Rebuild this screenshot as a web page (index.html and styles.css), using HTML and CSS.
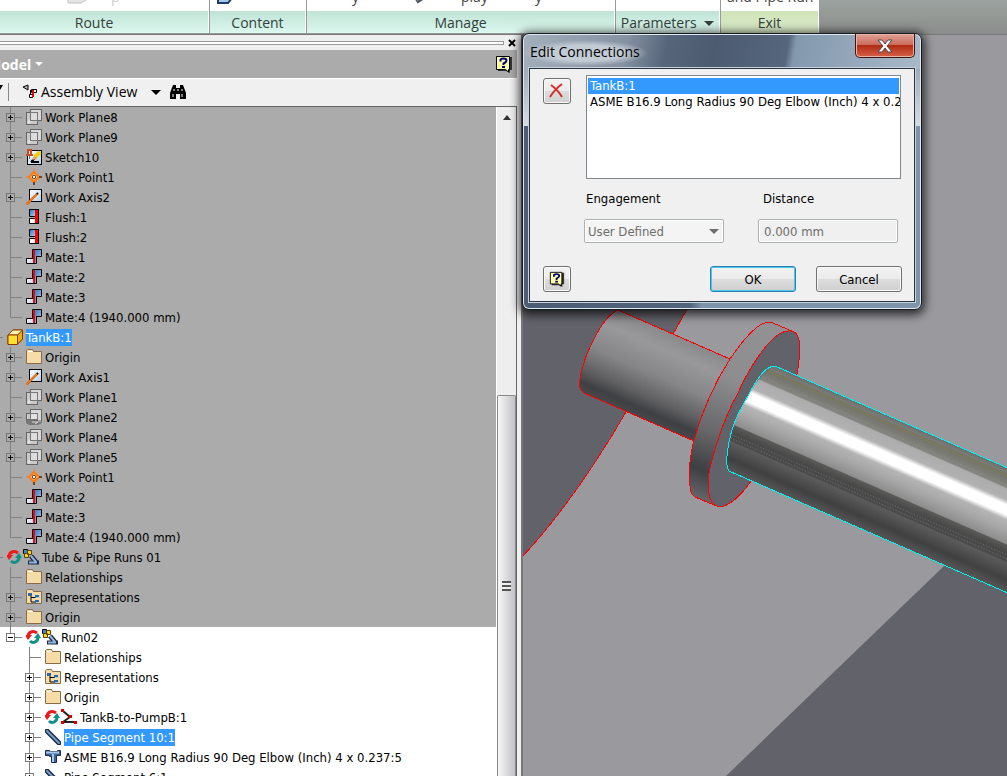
FILE: index.html
```html
<!DOCTYPE html>
<html lang="en">
<head>
    <meta charset="UTF-8">
    <meta name="viewport" content="width=device-width, initial-scale=1.0">
    <title>Edit Connections</title>
    <link rel="stylesheet" href="styles.css">
</head>
<body>

<!-- Icon set -->
<svg class="defs" width="0" height="0" aria-hidden="true">
    <defs>
        <linearGradient id="blueFill" x1="0" y1="0" x2="1" y2="1">
            <stop offset="0" stop-color="#2f78c0"/>
            <stop offset="1" stop-color="#a8d0f0"/>
        </linearGradient>
        <linearGradient id="paleFill" x1="0" y1="0" x2="1" y2="1">
            <stop offset="0" stop-color="#ffffff"/>
            <stop offset="1" stop-color="#b4d0ee"/>
        </linearGradient>
        <symbol id="plane" viewBox="0 0 16 16">
            <rect x="4.5" y=".5" width="11" height="11" fill="#d8d8d8" stroke="#666"/>
            <rect x=".5" y="3.5" width="11" height="12" fill="#c9c9c9" stroke="#666"/>
            <path d="M2 14L10 5" stroke="#dedede" stroke-width="3"/>
            <rect x="4.5" y="3.5" width="7" height="8" fill="#dcdcdc" stroke="#777"/>
        </symbol>
        <symbol id="planeCut" viewBox="0 0 16 16">
            <rect x="4.5" y=".5" width="11" height="11" fill="#d8d8d8" stroke="#666"/>
            <rect x=".5" y="4.5" width="11" height="6" fill="#c9c9c9" stroke="#666"/>
            <rect x="4.5" y="4.5" width="7" height="6" fill="#e2e2e2" stroke="#777"/>
            <path d="M0 11h6l3 1h7v2l-4 2H3l-3-2z" fill="#777"/>
            <path d="M6 13h6l-3 2M12 12h3" stroke="#d8d8d8" fill="none"/>
        </symbol>
        <symbol id="sketch" viewBox="0 0 16 16">
            <rect x="1.5" y="1.5" width="14" height="14" fill="url(#paleFill)" stroke="#000"/>
            <path d="M5 13h8M5 13l5-5" stroke="#000" stroke-width="2"/>
            <path d="M9 8l5-5" stroke="#f5d000" stroke-width="4"/>
            <path d="M6 11l2-4 3 3z" fill="#e8a868"/>
            <path d="M1 1h5M2 2v3M5 2v3M0 6h7" stroke="#d04a20" stroke-width="2"/>
            <path d="M3.500 6v4" stroke="#666"/>
        </symbol>
        <symbol id="point" viewBox="0 0 16 16">
            <path d="M8 0v16M0 8h16" stroke="#ff7a10"/>
            <path d="M8 3l5 5-5 5-5-5z" fill="#f8bc88" stroke="#ff7a10" stroke-width="2"/>
            <path d="M8 13v3M13 8h3" stroke="#000"/>
            <circle cx="8" cy="8" r="2" fill="#5a3010"/>
            <rect x="7" y="7" width="2" height="2" fill="#fff"/>
        </symbol>
        <symbol id="axis" viewBox="0 0 16 16">
            <rect x="3.500" y=".5" width="12" height="12" fill="url(#paleFill)" stroke="#000"/>
            <path d="M1 15L12 4" stroke="#000" stroke-width="2"/>
            <path d="M0 16L11 5" stroke="#ff7a10" stroke-width="2"/>
        </symbol>
        <symbol id="flush" viewBox="0 0 16 16">
            <path d="M3.500 .5h6v7h-6z" fill="url(#blueFill)" stroke="#000"/>
            <path d="M3.500 9.500h6v5h-6z" fill="#fff" stroke="#000"/>
            <path d="M9 .5h3.500v14H9" fill="none" stroke="#000"/>
            <path d="M10.500 1v13" stroke="#f00" stroke-width="3"/>
            <path d="M12.500 0v15" stroke="#000"/>
        </symbol>
        <symbol id="mate" viewBox="0 0 16 16">
            <path d="M8.500 .5h7v7h-5v7h-2z" fill="url(#blueFill)" stroke="#000"/>
            <path d="M.5 9.500h7v5h-7z" fill="url(#paleFill)" stroke="#000"/>
            <path d="M8 1v13" stroke="#f00" stroke-width="2"/>
            <path d="M6.500 9V.5H9M7 14.500h3" stroke="#000" fill="none"/>
        </symbol>
        <symbol id="part" viewBox="0 0 16 16">
            <path d="M1 6l5-5h9.500v9l-5 5H1z" fill="#ffe860" stroke="#8a3a00"/>
            <path d="M10.500 6l5-5v9l-5 5z" fill="#f0b000" stroke="#8a3a00"/>
            <path d="M1 6l5-5h9.500l-5 5z" fill="#fff6b0" stroke="#8a3a00"/>
            <path d="M1 6h9.500v9.500H1z" fill="#ffe030" stroke="#8a3a00"/>
        </symbol>
        <symbol id="folder" viewBox="0 0 16 16">
            <path d="M.5 14.500V1.500l1-1h5l1 2h8v12z" fill="#f6dca6" stroke="#8a6a48"/>
            <path d="M2 2.500h5" stroke="#fff"/>
        </symbol>
        <symbol id="reps" viewBox="0 0 16 16">
            <path d="M.5 14.500V1.500l1-1h5l1 2h8v12z" fill="#f6dca6" stroke="#8a6a48"/>
            <path d="M5 5v8h5M5 8.500h5" stroke="#000" fill="none"/>
            <path d="M2 4h4v3H2zM9 6h4v3H9zM9 11h4v3H9z" fill="#2a69a8"/>
            <path d="M10 8.500h4M10 13.500h3" stroke="#9fd0f5"/>
        </symbol>
        <symbol id="refresh" viewBox="0 0 16 16">
            <path d="M2 8c0-5 5-7 9-4" stroke="#f01818" stroke-width="3" fill="none"/>
            <path d="M-1 6h7L2 11z" fill="#f01818"/>
            <path d="M12 8c0 5-5 7-8 4" stroke="#109088" stroke-width="3" fill="none"/>
            <path d="M8 9h7l-3-5z" fill="#109088"/>
        </symbol>
        <symbol id="runs" viewBox="0 0 16 16">
            <path d="M.5 .5h4v4h-4z" fill="#3f86c8" stroke="#000"/>
            <path d="M4.500 1.500h4v4h-4zM1.500 4.500h4v4h-4z" fill="#ffd820" stroke="#5a4000"/>
            <path d="M8 7l5 6" stroke="#1c2c48" stroke-width="5"/>
            <path d="M5 13.500h11" stroke="#1c2c48" stroke-width="4"/>
            <path d="M8 7l5 6M6 13.500h8" stroke="#92b4dc" stroke-width="2"/>
        </symbol>
        <symbol id="route" viewBox="0 0 16 16">
            <path d="M2 2l7 6-7 5h12" stroke="#222" stroke-width="2" fill="none"/>
            <path d="M0 0h3v3H0zM8 6h3v3H8zM0 12h3v3H0zM13 12h3v3h-3z" fill="#e00000"/>
        </symbol>
        <symbol id="pipe" viewBox="0 0 16 16">
            <path d="M2 2l12 12" stroke="#1c2c48" stroke-width="5" stroke-linecap="round"/>
            <path d="M2 2l12 12" stroke="#7a9ecb" stroke-width="2" stroke-linecap="round"/>
        </symbol>
        <symbol id="elbow" viewBox="0 0 16 16">
            <path d="M.5 1.500h4v1h8v-1h3v5h-4v7h-5v-6h-2v-1h-4z" fill="#3f6598" stroke="#1c2c48"/>
            <path d="M1 3.500h13M8 5v8" stroke="#a8c8ea" stroke-width="2"/>
        </symbol>
        <symbol id="help" viewBox="0 0 18 18">
            <path d="M3 2h14v13h-2v3l-4-2H3z" fill="#333"/>
            <path d="M1.500 1.500h13v13h-1v2.500l-3-2.500h-9z" fill="#ffffa8" stroke="#000"/>
            <path d="M5.500 6.500V5q0-1.500 3-1.500t3 2q0 1.500-3 3v1.500" stroke="#00007c" stroke-width="2" fill="none"/>
            <path d="M7 11h3v2H7z" fill="#00007c"/>
        </symbol>
    </defs>
</svg>

<header class="ribbon">
    <section class="panel route">
        <div class="tools">
            <svg class="cut-icon" width="20" height="16" viewBox="0 0 20 16"><path d="M1 4h13l5-4v12l-5 3H1z" fill="#e4e4e4" stroke="#c2c2c2"/></svg>
            <span class="faded">p</span>
        </div>
        <h2>Route</h2>
    </section>
    <section class="panel content">
        <div class="tools">
            <svg class="cut-icon" width="16" height="16" viewBox="0 0 16 16"><path d="M1 4h11l3-3v9l-4 5H1z" fill="#a9c6e8" stroke="#1d3b66" stroke-width="2"/></svg>
        </div>
        <h2>Content</h2>
    </section>
    <section class="panel manage">
        <div class="tools">
            <span>y</span>
            <svg class="cut-icon" width="16" height="16" viewBox="0 0 16 16"><path d="M2 13l11-7" stroke="#505560" stroke-width="6"/><path d="M3 12l10-6" stroke="#aeb4bd" stroke-width="2"/></svg>
            <span>play</span>
            <span>y</span>
        </div>
        <h2>Manage</h2>
    </section>
    <section class="panel parameters">
        <div class="tools"></div>
        <h2>Parameters <i class="caret"></i></h2>
    </section>
    <section class="panel exit">
        <div class="tools"><span>and Pipe Run</span></div>
        <h2>Exit</h2>
    </section>
</header>

<main class="workspace">
    <aside class="browser">
        <div class="grip"><span class="grip-line"></span><button class="grip-close" aria-label="Close">
            <svg width="8" height="8" viewBox="0 0 8 8"><path d="M1 1l6 6M7 1L1 7" stroke="#000" stroke-width="2"/></svg></button></div>
        <div class="browser-title">
            <span class="model">Model</span><i class="caret"></i>
            <svg class="title-help" width="18" height="20"><use href="#help"/></svg>
        </div>
        <div class="toolbar">
            <svg width="22" height="20" viewBox="0 0 22 20">
                <path d="M0 3h3L0 8z" fill="#000"/>
                <path d="M8.500 1v18" stroke="#888"/>
            </svg>
            <svg width="16" height="20" viewBox="0 0 16 20">
                <path d="M1 5l5-2v5z" fill="#bbb" stroke="#000"/>
                <path d="M8.500 8v6" stroke="#000"/>
                <path d="M7.500 12.500h3v3h-3zM9.500 7.500h5v3h-5z" fill="#fff" stroke="#000"/>
                <path d="M11 8v7" stroke="#e00" stroke-width="2"/>
            </svg>
            <button class="view">Assembly View <i class="caret"></i></button>
            <button class="find" aria-label="Find">
                <svg width="16" height="14" viewBox="0 0 16 14"><path d="M3 0h3v3h4V0h3l3 8v6h-6V9H6v5H0V8z" fill="#000"/><path d="M3 9v3M4 4v2M12 9v3M12 4v2M8 4v2" stroke="#fff"/></svg>
            </button>
        </div>
        <div class="tree-wrap">
            <ul class="tree">
                <li class="row lv1"><i class="branch plus"></i><svg><use href="#plane"/></svg><span>Work Plane8</span></li>
                <li class="row lv1"><i class="branch plus"></i><svg><use href="#plane"/></svg><span>Work Plane9</span></li>
                <li class="row lv1"><i class="branch plus"></i><svg><use href="#sketch"/></svg><span>Sketch10</span></li>
                <li class="row lv1"><i class="branch"></i><svg><use href="#point"/></svg><span>Work Point1</span></li>
                <li class="row lv1"><i class="branch plus"></i><svg><use href="#axis"/></svg><span>Work Axis2</span></li>
                <li class="row lv1"><i class="branch"></i><svg><use href="#flush"/></svg><span>Flush:1</span></li>
                <li class="row lv1"><i class="branch"></i><svg><use href="#flush"/></svg><span>Flush:2</span></li>
                <li class="row lv1"><i class="branch"></i><svg><use href="#mate"/></svg><span>Mate:1</span></li>
                <li class="row lv1"><i class="branch"></i><svg><use href="#mate"/></svg><span>Mate:2</span></li>
                <li class="row lv1"><i class="branch"></i><svg><use href="#mate"/></svg><span>Mate:3</span></li>
                <li class="row lv1"><i class="branch last"></i><svg><use href="#mate"/></svg><span>Mate:4 (1940.000 mm)</span></li>

                <li class="row lv0"><i class="stub"></i><svg><use href="#part"/></svg><span class="selected">TankB:1</span></li>
                <li class="row lv1"><i class="branch plus"></i><svg><use href="#folder"/></svg><span>Origin</span></li>
                <li class="row lv1"><i class="branch plus"></i><svg><use href="#axis"/></svg><span>Work Axis1</span></li>
                <li class="row lv1"><i class="branch"></i><svg><use href="#plane"/></svg><span>Work Plane1</span></li>
                <li class="row lv1"><i class="branch plus"></i><svg><use href="#planeCut"/></svg><span>Work Plane2</span></li>
                <li class="row lv1"><i class="branch plus"></i><svg><use href="#plane"/></svg><span>Work Plane4</span></li>
                <li class="row lv1"><i class="branch plus"></i><svg><use href="#plane"/></svg><span>Work Plane5</span></li>
                <li class="row lv1"><i class="branch"></i><svg><use href="#point"/></svg><span>Work Point1</span></li>
                <li class="row lv1"><i class="branch"></i><svg><use href="#mate"/></svg><span>Mate:2</span></li>
                <li class="row lv1"><i class="branch"></i><svg><use href="#mate"/></svg><span>Mate:3</span></li>
                <li class="row lv1"><i class="branch last"></i><svg><use href="#mate"/></svg><span>Mate:4 (1940.000 mm)</span></li>

                <li class="row lv0"><i class="stub"></i><svg class="state"><use href="#refresh"/></svg><svg><use href="#runs"/></svg><span>Tube &amp; Pipe Runs 01</span></li>
                <li class="row lv1"><i class="branch"></i><svg><use href="#folder"/></svg><span>Relationships</span></li>
                <li class="row lv1"><i class="branch plus"></i><svg><use href="#reps"/></svg><span>Representations</span></li>
                <li class="row lv1"><i class="branch plus"></i><svg><use href="#folder"/></svg><span>Origin</span></li>

                <!-- Run being edited -->
                <li class="row lv1 editing"><i class="branch minus last"></i><svg class="state"><use href="#refresh"/></svg><svg><use href="#runs"/></svg><span>Run02</span></li>
                <li class="row lv2 editing"><i class="branch"></i><svg><use href="#folder"/></svg><span>Relationships</span></li>
                <li class="row lv2 editing"><i class="branch plus"></i><svg><use href="#reps"/></svg><span>Representations</span></li>
                <li class="row lv2 editing"><i class="branch plus"></i><svg><use href="#folder"/></svg><span>Origin</span></li>
                <li class="row lv2 editing"><i class="branch plus"></i><svg class="state"><use href="#refresh"/></svg><svg><use href="#route"/></svg><span>TankB-to-PumpB:1</span></li>
                <li class="row lv2 editing"><i class="branch plus"></i><svg><use href="#pipe"/></svg><span class="selected">Pipe Segment 10:1</span></li>
                <li class="row lv2 editing"><i class="branch plus"></i><svg><use href="#elbow"/></svg><span>ASME B16.9 Long Radius 90 Deg Elbow (Inch) 4 x 0.237:5</span></li>
                <li class="row lv2 editing"><i class="branch plus"></i><svg><use href="#pipe"/></svg><span>Pipe Segment 6:1</span></li>
            </ul>
            <div class="scrollbar">
                <i class="arrow-up"></i>
                <div class="thumb"><i class="thumb-grip"></i></div>
            </div>
        </div>
    </aside>

    <section class="viewport">
        <svg class="scene" viewBox="523 35 484 741" preserveAspectRatio="xMinYMin slice">
            <defs>
                <linearGradient id="stubFill" gradientUnits="userSpaceOnUse" x1="672" y1="334" x2="636" y2="416">
                    <stop offset="0" stop-color="#8a8a8c"/>
                    <stop offset=".2" stop-color="#99999c"/>
                    <stop offset=".5" stop-color="#858587"/>
                    <stop offset=".75" stop-color="#606062"/>
                    <stop offset=".9" stop-color="#3f4043"/>
                    <stop offset="1" stop-color="#48484b"/>
                </linearGradient>
                <linearGradient id="flangeFill" gradientUnits="userSpaceOnUse" x1="770" y1="322" x2="700" y2="500">
                    <stop offset="0" stop-color="#929295"/>
                    <stop offset=".35" stop-color="#8d8d90"/>
                    <stop offset=".65" stop-color="#67676a"/>
                    <stop offset=".85" stop-color="#3e3f43"/>
                    <stop offset="1" stop-color="#67676a"/>
                </linearGradient>
                <linearGradient id="steel" gradientUnits="userSpaceOnUse" x1="775" y1="366" x2="729" y2="471">
                    <stop offset="0" stop-color="#6d6d6d"/>
                    <stop offset=".04" stop-color="#7b7b78"/>
                    <stop offset=".06" stop-color="#74745f"/>
                    <stop offset=".08" stop-color="#777770"/>
                    <stop offset=".16" stop-color="#858582"/>
                    <stop offset=".17" stop-color="#acacac"/>
                    <stop offset=".26" stop-color="#b2b2b2"/>
                    <stop offset=".3" stop-color="#ffffff"/>
                    <stop offset=".38" stop-color="#ffffff"/>
                    <stop offset=".42" stop-color="#b4b4b4"/>
                    <stop offset=".5" stop-color="#a8a8a8"/>
                    <stop offset=".61" stop-color="#8e8e8e"/>
                    <stop offset=".62" stop-color="#5a5a58"/>
                    <stop offset=".68" stop-color="#4a4a4a"/>
                    <stop offset=".75" stop-color="#4b4b4b"/>
                    <stop offset=".76" stop-color="#5c5c5c"/>
                    <stop offset=".9" stop-color="#414141"/>
                    <stop offset="1" stop-color="#575757"/>
                </linearGradient>
                <clipPath id="pipeClip">
                    <path d="M775 366L1007 468V593L729 471C722 462 733 420 743 405C752 389 762 370 775 366z"/>
                </clipPath>
            </defs>

            <rect x="523" y="35" width="484" height="741" fill="#9a9a9e"/>
            <path d="M523 35H800L687 310L673 334L626 412Q575 500 523 556z" fill="#62626a"/>
            <path d="M700 35L1007 35V380L673 334L687 310z" fill="#9a9a9e"/>
            <path d="M1007 502L943 567L726 776H1007z" fill="#62626a"/>
            <path class="edge" d="M690 304L673 334L626 412Q575 500 523 556"/>

            <!-- Nozzle -->
            <path class="edge" d="M618 310C600 318 577 368 580 388Q581 391 584 393L694 441L730 359z" fill="url(#stubFill)"/>

            <!-- Flange -->
            <path class="edge" d="M794 332L773 323C758 316 735 352 730 359C717 379 703 408 694 440C689 460 688 478 691 492Q692 495 695 497L719 507z" fill="url(#flangeFill)"/>
            <path class="edge" d="M788 331C801 329 802 346 797 374C790 410 770 455 751 481C740 497 728 507 719 507C710 504 708 496 708 480C710 460 725 415 737 395C747 372 770 332 788 331z" fill="#62626a"/>

            <!-- Pipe segment -->
            <g clip-path="url(#pipeClip)">
                <path d="M720 350H1007V600H720z" fill="url(#steel)"/>
                <path d="M760 376L1007 485M758 379L1007 488M730 434L1007 555M728 437L1007 559" stroke="#a5a5a0" stroke-dasharray="1 2" opacity=".4"/>
                <path d="M768 371L1007 476" stroke="#7e7e5a"/>
            </g>
            <path d="M1010 594L729 471C724 464 728 430 743 405C752 389 762 366 775 366L1010 469" fill="none" stroke="#00f0f0" shape-rendering="crispEdges"/>
        </svg>

        <form class="dialog" onsubmit="return false">
            <div class="dialog-title">
                <h1>Edit Connections</h1>
                <button type="button" class="close" aria-label="Close">
                    <svg width="18" height="16" viewBox="0 0 18 16"><path d="M2 2h4l3 4 3-4h4l-5 6 5 6h-4l-3-4-3 4H2l5-6z" fill="#fff" stroke="#4a4a55"/></svg>
                </button>
            </div>
            <div class="client">
                <button type="button" class="tool remove" aria-label="Remove">
                    <svg width="16" height="16" viewBox="0 0 16 16"><path d="M2 2q7 5 11 12M13 1Q6 6 1 14" stroke="#d23030" stroke-width="2" fill="none"/></svg>
                </button>
                <select class="parts" size="6" aria-label="Connections">
                    <option selected>TankB:1</option>
                    <option>ASME B16.9 Long Radius 90 Deg Elbow (Inch) 4 x 0.237:5</option>
                </select>

                <label class="engagement" for="engagement">Engagement</label>
                <label class="distance" for="distance">Distance</label>
                <div class="dropdown">
                    <select id="engagement" disabled><option>User Defined</option></select>
                    <i class="caret"></i>
                </div>
                <input id="distance" type="text" value="0.000 mm" disabled>

                <button type="button" class="tool help" aria-label="Help">
                    <svg width="16" height="16"><use href="#help"/></svg>
                </button>
                <div class="actions">
                    <button class="btn ok">OK</button>
                    <button type="button" class="btn">Cancel</button>
                </div>
            </div>
        </form>
    </section>
</main>

</body>
</html>
```
FILE: styles.css
```css
* {
    box-sizing: border-box;
}

body {
    margin: 0;
    height: 100vh;
    display: flex;
    flex-direction: column;
    overflow: hidden;
    font-family: "DejaVu Sans Condensed", Tahoma, sans-serif;
    font-size: 13px;
    color: #000;
    background-color: #f0f0f0;
}

h1, h2 {
    margin: 0;
    font-weight: normal;
}

button, input, select {
    font: inherit;
    color: inherit;
}

button {
    padding: 0;
    border: none;
    background: none;
}

.defs {
    position: absolute;
}

.caret {
    display: inline-block;
    border: 5px solid transparent;
    border-top-color: currentColor;
    border-bottom: none;
}

/* Ribbon */
.ribbon {
    display: flex;
    flex: none;
    height: 35px;
    background: linear-gradient(#9ca29f, #8a8d8b);
    border-bottom: 1px solid #777;
    font-family: "Open Sans", "Segoe UI", sans-serif;
    font-size: 14px;
}

.panel {
    display: flex;
    flex-direction: column;
    border-right: 1px solid #999;
    border-bottom: 1px solid #999;
    box-shadow: inset -1px 0 #fff;
    background-color: #fff;
}

.tools {
    display: flex;
    height: 11px;
    line-height: 20px;
    overflow: hidden;
    color: #444;
}

.tools span,
.cut-icon {
    flex: none;
    margin-top: -13px;
}

.cut-icon {
    margin-top: -12px;
}

.panel h2 {
    height: 22px;
    line-height: 23px;
    font-size: 14px;
    text-align: center;
    color: #33403c;
    background: linear-gradient(#c0e3d6, #dcf8ee);
    margin-right: 1px;
}

.route {
    width: 210px;
}

.route h2 {
    padding-right: 20px;
}

.route .tools {
    padding-left: 67px;
    gap: 24px;
}

.faded {
    color: #ccc;
}

.content {
    width: 97px;
}

.content .tools {
    padding-left: 7px;
}

.manage {
    width: 309px;
}

.manage .tools {
    padding-left: 45px;
    gap: 47px;
}

.manage .cut-icon {
    margin-left: 8px;
    margin-right: -16px;
}

.parameters {
    width: 105px;
}

.parameters .caret {
    margin-left: 4px;
    vertical-align: 2px;
}

.exit {
    width: 99px;
}

.exit .tools {
    padding-left: 6px;
}

.exit h2 {
    background: linear-gradient(#cfe3b8, #dcecca);
}

/* Model browser */
.workspace {
    display: flex;
    flex: 1;
    min-height: 0;
}

.browser {
    display: flex;
    flex-direction: column;
    flex: none;
    width: 523px;
    border-right: 2px solid #777;
    padding-right: 4px;
    background-color: #f0f0f0;
}

.grip {
    display: flex;
    align-items: center;
    flex: none;
    height: 15px;
}

.grip-line {
    flex: 1;
    height: 4px;
    border: 1px solid #999;
    border-left: none;
    background-color: #fff;
}

.grip-close {
    display: flex;
    margin: 0 1px 0 4px;
}

.browser-title {
    display: flex;
    align-items: center;
    flex: none;
    height: 29px;
    padding-right: 4px;
    background-color: #ababab;
    border-bottom: 1px solid #fff;
    color: #fff;
    font-family: "Open Sans", "Segoe UI", sans-serif;
    font-size: 14px;
    font-weight: bold;
}

.model {
    margin-left: -12px;
}

.browser-title .caret {
    margin-left: 4px;
    border-width: 4px;
    border-bottom: none;
}

.title-help {
    margin-left: auto;
}

.toolbar {
    display: flex;
    align-items: center;
    flex: none;
    height: 28px;
    padding-bottom: 2px;
    border-bottom: 1px solid #666;
}

.view {
    margin-left: 3px;
    font-family: "Open Sans", "Segoe UI", sans-serif;
    font-size: 14px;
}

.view .caret {
    margin-left: 10px;
    vertical-align: 2px;
}

.find {
    display: flex;
    margin-left: 9px;
}

.tree-wrap {
    display: flex;
    flex: 1;
    min-height: 0;
    border-right: 1px solid #666;
}

.tree {
    flex: 1;
    margin: 0;
    padding: 0;
    overflow: hidden;
    list-style: none;
    background-color: #fff;
}

.row {
    display: flex;
    align-items: center;
    height: 20px;
    white-space: nowrap;
    background-color: #ababab;
}

.row.editing {
    background-color: #fff;
}

.lv1 {
    padding-left: 3px;
}

.lv2 {
    padding-left: 22px;
}

.row svg {
    flex: none;
    width: 16px;
    height: 16px;
    margin-right: 3px;
}

.row svg.state {
    margin-right: 0;
}

.row span {
    line-height: 17px;
}

.selected {
    color: #fff;
    background-color: #3399ff;
}

.stub {
    width: 3px;
    height: 1px;
    margin-right: 4px;
    background-color: #808080;
}

.branch {
    position: relative;
    flex: none;
    width: 19px;
    height: 20px;
    margin-right: 4px;
    background:
        linear-gradient(#808080, #808080) 7px 0 / 1px 100% no-repeat,
        linear-gradient(#808080, #808080) 7px 10px / 12px 1px no-repeat;
}

.branch.last {
    background-size: 1px 10px, 12px 1px;
}

/* Expander box drawn over the branch line */
.plus::before,
.minus::before {
    content: "";
    position: absolute;
    left: 3px;
    top: 6px;
    width: 7px;
    height: 7px;
    border: 1px solid #777;
    background:
        linear-gradient(#000, #000) center / 5px 1px no-repeat,
        linear-gradient(#000, #000) center / 1px 5px no-repeat,
        #ababab;
}

.editing .plus::before {
    background-color: #fff;
}

.minus::before {
    background: linear-gradient(#000, #000) center / 5px 1px no-repeat, #fff;
}

.scrollbar {
    display: flex;
    flex-direction: column;
    align-items: center;
    flex: none;
    width: 20px;
    border-left: 1px solid #fff;
    background-color: #eee;
}

.arrow-up {
    margin-top: 8px;
    border: 4px solid transparent;
    border-bottom: 5px solid #333;
    border-top: none;
}

.thumb {
    display: flex;
    justify-content: center;
    align-items: center;
    flex: none;
    width: 19px;
    height: 57%;
    margin-top: auto;
    border: 1px solid #888;
    border-bottom: none;
    border-radius: 2px 2px 0 0;
    background: linear-gradient(to right, #f6f6f6, #dcdcde 50%, #c2c2c8);
}

.thumb-grip {
    width: 9px;
    height: 10px;
    background: repeating-linear-gradient(#555 0, #555 2px, #eee 2px, #eee 4px);
}

/* Viewport */
.viewport {
    position: relative;
    flex: 1;
    min-width: 0;
    background-color: #9a9a9e;
}

.scene {
    display: block;
    width: 100%;
    height: 100%;
}

.edge {
    stroke: #ff0000;
    shape-rendering: crispEdges;
}

.edge:not([fill]) {
    fill: none;
}

/* Dialog */
.dialog {
    position: absolute;
    left: -1px;
    top: -2px;
    width: 400px;
    padding: 0 6px 7px;
    border: 1px solid #161b22;
    border-radius: 7px;
    box-shadow: inset 0 0 0 1px #dfe8f0, 0 2px 10px 3px rgba(0, 0, 0, 0.7);
    background:
        radial-gradient(closest-side, rgba(200, 208, 216, 0.9) 60%, transparent) 0 6px / 125px 26px no-repeat,
        linear-gradient(100deg, #a3afbc 0, #8592a2 26%, #56657a 36%, #4c5b70 48%, #56667c 66%, #8398ae 68%, #a9b9c9 100%) 0 0 / 100% 35px no-repeat,
        linear-gradient(#9cabba, #d5dde5) 0 35px / 100% 57px no-repeat,
        linear-gradient(to right, #4b5d74, #52647b 42%, #7d94aa 45%, #7d94aa);
}

.dialog-title {
    display: flex;
    justify-content: space-between;
    height: 34px;
}

.dialog h1 {
    padding: 0 1px;
    line-height: 35px;
    font-family: "Open Sans", "Segoe UI", sans-serif;
    font-size: 14px;
}

.close {
    display: flex;
    justify-content: center;
    align-items: center;
    width: 60px;
    height: 24px;
    border: 1px solid #3d1512;
    border-top: none;
    border-radius: 0 0 5px 5px;
    box-shadow: inset 0 0 0 1px #e8b4a8;
    background: linear-gradient(#dfa297, #cc6a5a 48%, #b02c12 50%, #d8604a);
}

.client {
    display: grid;
    grid-template-columns: 28px 140px 140px;
    grid-template-rows: 104px 38px 26px 23px 26px;
    column-gap: 13px;
    justify-content: start;
    height: 234px;
    padding: 6px 11px 0 13px;
    border: 1px solid #2b3440;
    outline: 1px solid #c8d2dc;
    background-color: #f0f0f0;
}

.tool,
.btn {
    display: flex;
    justify-content: center;
    align-items: center;
    height: 26px;
    border: 1px solid #707070;
    border-radius: 3px;
    box-shadow: inset 0 0 0 1px #fafafa;
    background: linear-gradient(#f2f2f2, #ebebeb 48%, #dddddd 50%, #cfcfcf);
}

.remove {
    margin-top: 3px;
}

.help {
    grid-row: 5;
}

.parts {
    grid-column: 2 / 4;
    width: 315px;
    height: 104px;
    margin-left: 2px;
    padding: 2px 1px;
    border: 1px solid #828790;
    border-radius: 0;
    background-color: #fff;
    overflow: hidden;
}

.parts option {
    height: 16px;
    min-height: 16px;
    padding: 0 2px;
    line-height: 16px;
}

.parts option:checked {
    color: #fff;
    background: linear-gradient(#3399ff, #3399ff);
}

.client label {
    align-self: center;
}

.engagement {
    grid-column: 2;
    padding-left: 2px;
}

.distance {
    grid-column: 3;
    padding-left: 26px;
}

.dropdown {
    grid-column: 2;
    display: grid;
    align-items: center;
    height: 24px;
    margin-top: 2px;
    color: #6d6d6d;
}

.dropdown select,
.dropdown .caret {
    grid-area: 1 / 1;
}

.dropdown .caret {
    justify-self: end;
    margin-right: 5px;
}

.dropdown select,
#distance {
    appearance: none;
    width: 140px;
    height: 24px;
    padding: 0 3px;
    border: 1px solid #adb2b5;
    border-radius: 2px;
    box-shadow: inset 0 0 0 1px #fff;
    background-color: #f4f4f4;
    color: #6d6d6d;
    opacity: 1;
}

#distance {
    margin: 2px 0 0 21px;
    padding-left: 5px;
    background-color: #f0f0f0;
}

.actions {
    grid-column: 2 / 4;
    grid-row: 5;
    display: flex;
    justify-content: flex-end;
    gap: 20px;
    width: 318px;
}

.btn {
    width: 86px;
}

.ok {
    border-color: #2f7fb0;
    box-shadow: inset 0 0 0 1px #46c8f0;
}
```
